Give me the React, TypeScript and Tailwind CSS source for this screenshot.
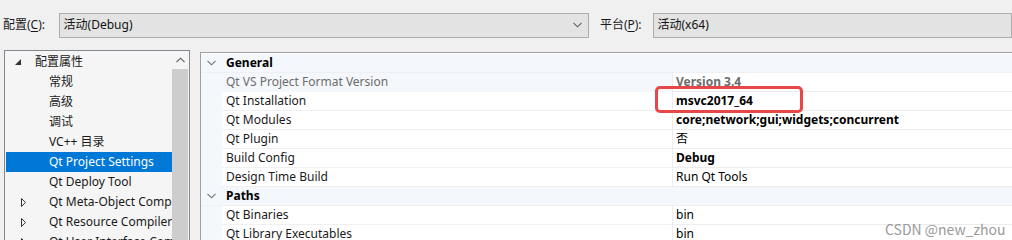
import React from 'react';

const font = "font-[family-name:'Noto_Sans','Noto_Sans_CJK_SC',sans-serif]";

type TreeItem = { label: string; level: number; open?: boolean; closed?: boolean; selected?: boolean };

const tree: TreeItem[] = [
    { label: '配置属性', level: 0, open: true },
    { label: '常规', level: 1 },
    { label: '高级', level: 1 },
    { label: '调试', level: 1 },
    { label: 'VC++ 目录', level: 1 },
    { label: 'Qt Project Settings', level: 1, selected: true },
    { label: 'Qt Deploy Tool', level: 1 },
    { label: 'Qt Meta-Object Compiler', level: 1, closed: true },
    { label: 'Qt Resource Compiler', level: 1, closed: true },
    { label: 'Qt User Interface Compiler', level: 1, closed: true },
];

type Row =
    | { kind: 'header'; label: string }
    | { kind: 'prop'; name: string; value: string; bold?: boolean; readOnly?: boolean };

const rows: Row[] = [
    { kind: 'header', label: 'General' },
    { kind: 'prop', name: 'Qt VS Project Format Version', value: 'Version 3.4', bold: true, readOnly: true },
    { kind: 'prop', name: 'Qt Installation', value: 'msvc2017_64', bold: true },
    { kind: 'prop', name: 'Qt Modules', value: 'core;network;gui;widgets;concurrent', bold: true },
    { kind: 'prop', name: 'Qt Plugin', value: '否' },
    { kind: 'prop', name: 'Build Config', value: 'Debug', bold: true },
    { kind: 'prop', name: 'Design Time Build', value: 'Run Qt Tools' },
    { kind: 'header', label: 'Paths' },
    { kind: 'prop', name: 'Qt Binaries', value: 'bin' },
    { kind: 'prop', name: 'Qt Library Executables', value: 'bin' },
];

const Chevron = ({ className }: { className?: string }) => (
    <svg width="9" height="6" viewBox="0 0 9 6" className={className}>
        <path d="M0.5 0.8 L4.5 4.8 L8.5 0.8" fill="none" stroke="currentColor" strokeWidth="1.1" />
    </svg>
);

const Combo = ({ value, arrow, className }: { value: string; arrow?: boolean; className: string }) => (
    <div className={`h-[25px] flex items-center bg-[#e3e3e3] border border-[#adadad] pl-[4px] pr-[6px] ${className}`}>
        <span className="flex-1 text-[12px] text-[#111]">{value}</span>
        {arrow && <Chevron className="text-[#606060]" />}
    </div>
);

export default function App() {
    return (
        <div className={`relative w-[1012px] h-[240px] overflow-hidden bg-[#f0f0f0] ${font} text-[12px] text-[#1a1a1a]`}>
            {/* top config bar */}
            <div className="flex items-center h-[49px] pt-[1px]">
                <span className="ml-[3px] w-[56px]">
                    配置(<span className="underline underline-offset-2">C</span>):
                </span>
                <Combo value="活动(Debug)" arrow className="w-[534px]" />
                <span className="ml-[11px] w-[53px]">
                    平台(<span className="underline underline-offset-2">P</span>):
                </span>
                <Combo value="活动(x64)" className="w-[362px]" />
            </div>

            <div className="flex items-start pt-[1px]">
                {/* left tree */}
                <div className="ml-[4px] w-[186px] h-[200px] border border-[#828790] bg-[#f5f5f5] flex">
                    <div className="flex-1 overflow-hidden pt-[1px]">
                        {tree.map((t) => (
                            <div
                                key={t.label}
                                className={`h-[20px] flex items-center whitespace-nowrap ml-[1px] ${t.selected ? 'bg-[#0078d7] text-white' : ''}`}
                            >
                                {t.level === 0 ? (
                                    <>
                                        <svg width="6" height="6" viewBox="0 0 6 6" className="ml-[9px] mr-[14px]">
                                            <path d="M6 0 L6 6 L0 6 Z" fill="#333" />
                                        </svg>
                                        <span>{t.label}</span>
                                    </>
                                ) : (
                                    <>
                                        <span className="w-[29px] shrink-0 flex justify-end pr-[9px]">
                                            {t.closed && (
                                                <svg width="5" height="9" viewBox="0 0 5 9">
                                                    <path d="M0.5 0.5 L4.5 4.5 L0.5 8.5 Z" fill="none" stroke="#333" strokeWidth="1" />
                                                </svg>
                                            )}
                                        </span>
                                        <span className="ml-[14px]">{t.label}</span>
                                    </>
                                )}
                            </div>
                        ))}
                    </div>
                    <div className="w-[16px] mr-[1px] flex flex-col">
                        <div className="h-[18px] flex items-center justify-center">
                            <Chevron className="rotate-180 text-[#555]" />
                        </div>
                        <div className="flex-1 bg-[#cdcdcd]" />
                    </div>
                </div>

                {/* right property grid */}
                <div className="ml-[10px] mt-[2px] flex-1 border-l border-t border-[#a0a0a0] bg-white pt-[1px]">
                    {rows.map((r, i) =>
                        r.kind === 'header' ? (
                            <div key={i} className="h-[19px] flex items-center bg-[#f4f7fb] border-b border-[#eef0f3]">
                                <span className="w-[21px] flex justify-center">
                                    <Chevron className="text-[#707070]" />
                                </span>
                                <span className="ml-[4px] font-bold text-black">{r.label}</span>
                            </div>
                        ) : (
                            <div key={i} className="h-[19px] flex">
                                <div className="w-[21px] bg-[#f4f7fb]" />
                                <div
                                    className={`w-[450px] flex items-center pl-[4px] border-b border-[#f0f0f0] ${r.readOnly ? 'bg-[#f4f7fb] text-[#6d6d6d] border-[#f4f7fb]' : ''}`}
                                >
                                    {r.name}
                                </div>
                                <div
                                    className={`flex-1 flex items-center pl-[3px] border-l border-b border-[#ececec] ${r.bold ? 'font-bold' : ''} ${r.readOnly ? 'text-[#6d6d6d]' : 'text-black'}`}
                                >
                                    {r.value}
                                </div>
                            </div>
                        )
                    )}
                </div>
            </div>

            {/* annotation overlay */}
            <div className="absolute left-[655px] top-[86px] w-[148px] h-[27px] border-[3px] border-[#e8474a] rounded-[5px]" />
            <div className="absolute left-[885px] top-[219px] text-[14px] text-[#9a9a9a] font-[family-name:'Noto_Sans_CJK_SC',sans-serif]">
                CSDN @new_zhou
            </div>
        </div>
    );
}
